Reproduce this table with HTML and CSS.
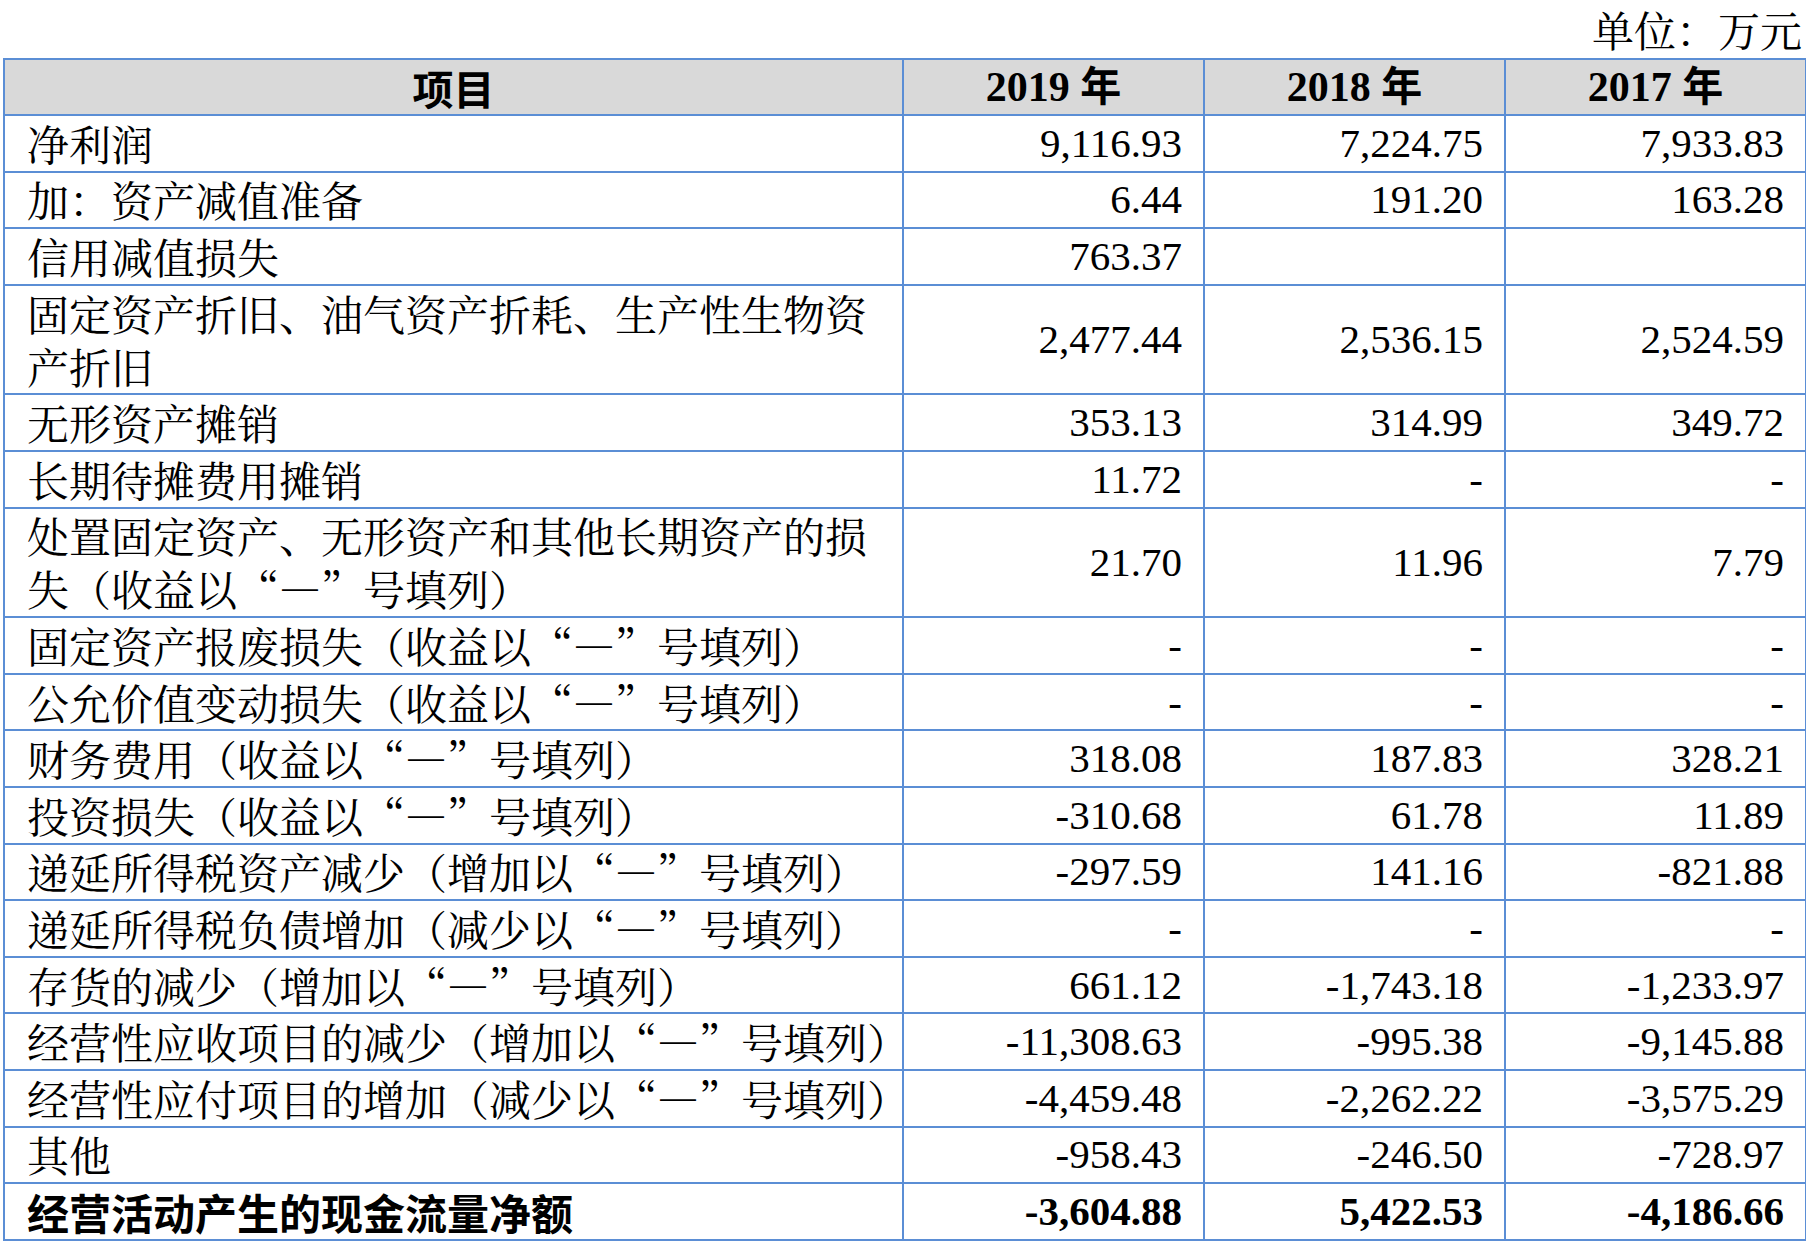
FILE: index.html
```html
<!DOCTYPE html>
<html lang="zh-CN">
<head>
<meta charset="utf-8">
<link rel="stylesheet" href="styles.css">
</head>
<body>
<div class="unit">单位：万元</div>
<table class="cf">
  <colgroup>
    <col class="c-item">
    <col class="c-year">
    <col class="c-year">
    <col class="c-year">
  </colgroup>
  <thead>
    <tr>
      <th class="h-item">项目</th>
      <th class="h-year">2019 <span class="cjk">年</span></th>
      <th class="h-year">2018 <span class="cjk">年</span></th>
      <th class="h-year">2017 <span class="cjk">年</span></th>
    </tr>
  </thead>
  <tbody>
    <tr><td class="lab">净利润</td><td class="num">9,116.93</td><td class="num">7,224.75</td><td class="num">7,933.83</td></tr>
    <tr><td class="lab">加：资产减值准备</td><td class="num">6.44</td><td class="num">191.20</td><td class="num">163.28</td></tr>
    <tr><td class="lab">信用减值损失</td><td class="num">763.37</td><td class="num"></td><td class="num"></td></tr>
    <tr><td class="lab">固定资产折旧、油气资产折耗、生产性生物资<br>产折旧</td><td class="num">2,477.44</td><td class="num">2,536.15</td><td class="num">2,524.59</td></tr>
    <tr><td class="lab">无形资产摊销</td><td class="num">353.13</td><td class="num">314.99</td><td class="num">349.72</td></tr>
    <tr><td class="lab">长期待摊费用摊销</td><td class="num">11.72</td><td class="num">-</td><td class="num">-</td></tr>
    <tr><td class="lab">处置固定资产、无形资产和其他长期资产的损<br>失（收益以“—”号填列）</td><td class="num">21.70</td><td class="num">11.96</td><td class="num">7.79</td></tr>
    <tr><td class="lab">固定资产报废损失（收益以“—”号填列）</td><td class="num">-</td><td class="num">-</td><td class="num">-</td></tr>
    <tr><td class="lab">公允价值变动损失（收益以“—”号填列）</td><td class="num">-</td><td class="num">-</td><td class="num">-</td></tr>
    <tr><td class="lab">财务费用（收益以“—”号填列）</td><td class="num">318.08</td><td class="num">187.83</td><td class="num">328.21</td></tr>
    <tr><td class="lab">投资损失（收益以“—”号填列）</td><td class="num">-310.68</td><td class="num">61.78</td><td class="num">11.89</td></tr>
    <tr><td class="lab">递延所得税资产减少（增加以“—”号填列）</td><td class="num">-297.59</td><td class="num">141.16</td><td class="num">-821.88</td></tr>
    <tr><td class="lab">递延所得税负债增加（减少以“—”号填列）</td><td class="num">-</td><td class="num">-</td><td class="num">-</td></tr>
    <tr><td class="lab">存货的减少（增加以“—”号填列）</td><td class="num">661.12</td><td class="num">-1,743.18</td><td class="num">-1,233.97</td></tr>
    <tr><td class="lab">经营性应收项目的减少（增加以“—”号填列）</td><td class="num">-11,308.63</td><td class="num">-995.38</td><td class="num">-9,145.88</td></tr>
    <tr><td class="lab">经营性应付项目的增加（减少以“—”号填列）</td><td class="num">-4,459.48</td><td class="num">-2,262.22</td><td class="num">-3,575.29</td></tr>
    <tr><td class="lab">其他</td><td class="num">-958.43</td><td class="num">-246.50</td><td class="num">-728.97</td></tr>
    <tr class="total"><td class="lab">经营活动产生的现金流量净额</td><td class="num">-3,604.88</td><td class="num">5,422.53</td><td class="num">-4,186.66</td></tr>
  </tbody>
</table>
</body>
</html>
```

FILE: styles.css
```css
html, body {
  margin: 0;
  padding: 0;
  background: #ffffff;
  color: #000000;
}

.unit {
  font-family: "Noto Serif CJK SC", "Noto Sans CJK SC", serif;
  font-size: 42px;
  line-height: 53px;
  height: 53px;
  padding: 3px 4px 2px 0;
  text-align: right;
}

.cf {
  margin-left: 3px;
  width: 1802px;
  table-layout: fixed;
  border-collapse: collapse;
}

.c-item { width: 899px; }
.c-year { width: 301px; }

.cf th,
.cf td {
  border: 2px solid #5b8ed5;
  padding: 0.8px 0 0.8px 0;
  line-height: 53px;
  vertical-align: middle;
  white-space: nowrap;
  overflow: visible;
}

.cf thead th {
  background: #d9d9d9;
  text-align: center;
  font-weight: bold;
  height: 54px;
  padding: 0;
}

.h-item {
  font-family: "Noto Sans CJK SC", sans-serif;
  font-size: 41px;
}

.h-year {
  font-family: "Liberation Serif", "Noto Sans CJK SC", serif;
  font-size: 42px;
}

.h-year .cjk {
  font-family: "Noto Sans CJK SC", sans-serif;
  font-size: 41px;
  line-height: 1;
}

.lab {
  font-family: "Noto Serif CJK SC", "Noto Sans CJK SC", serif;
  font-size: 42px;
  text-align: left;
  padding-left: 22px !important;
  padding-right: 0 !important;
}

.num {
  font-family: "Liberation Serif", serif;
  font-size: 41px;
  text-align: right;
  padding-right: 21px !important;
}

.total td {
  font-weight: bold;
}

.total .lab {
  font-family: "Noto Sans CJK SC", sans-serif;
}
```
